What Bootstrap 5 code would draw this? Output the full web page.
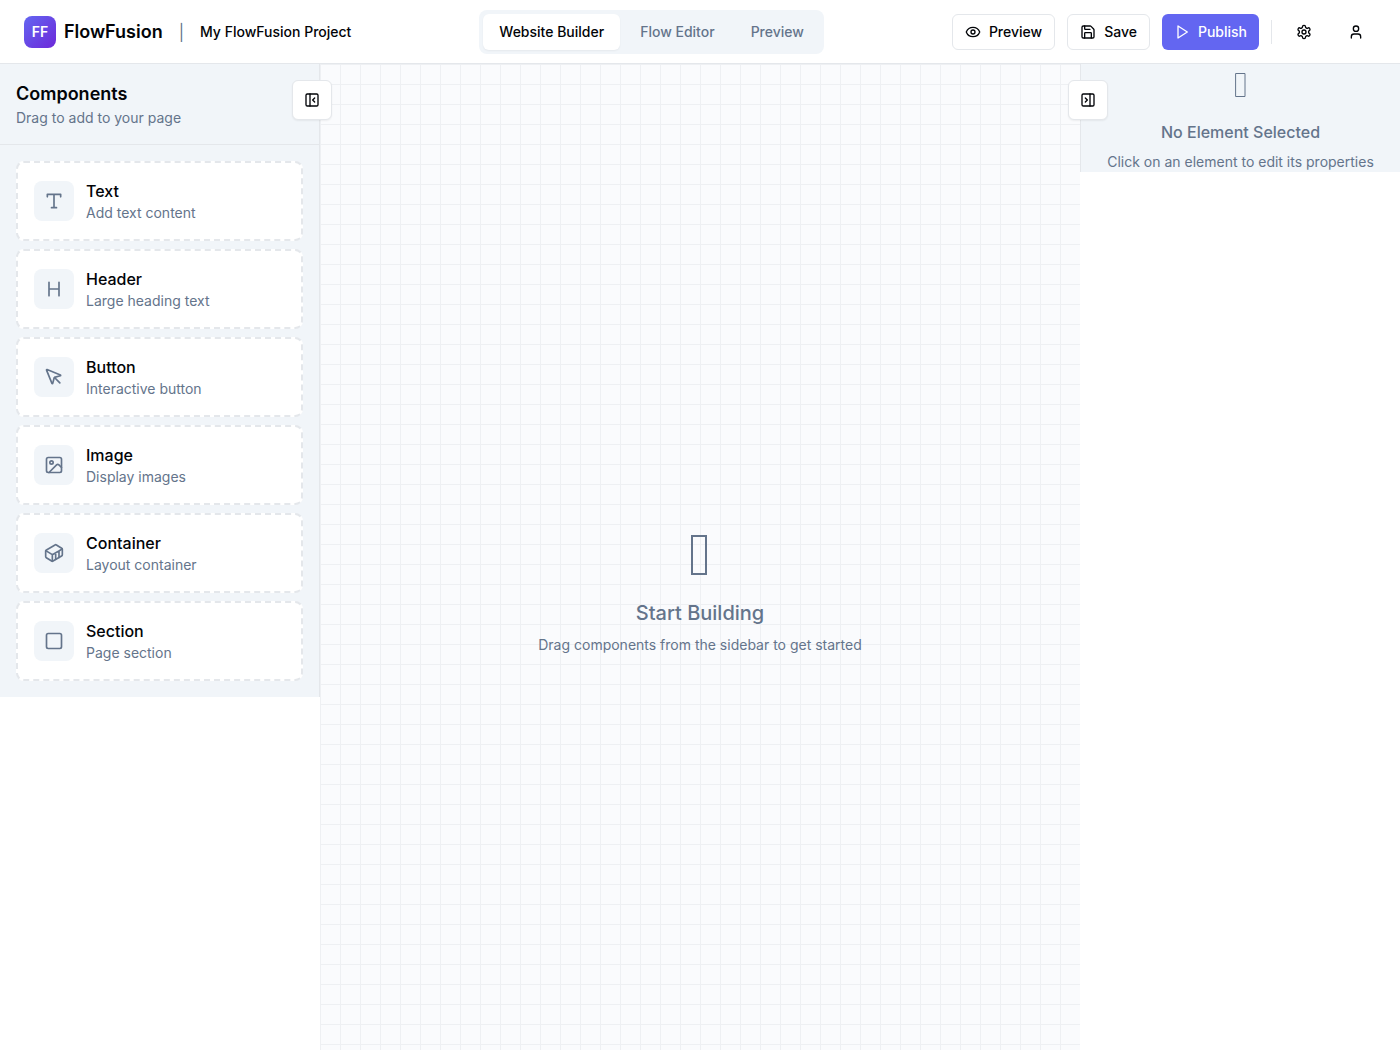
<!DOCTYPE html>
<html lang="en">
<head>
<meta charset="utf-8">
<meta name="viewport" content="width=device-width, initial-scale=1">
<title>FlowFusion</title>
<link href="https://cdn.jsdelivr.net/npm/bootstrap@5.3.0/dist/css/bootstrap.min.css" rel="stylesheet">
<style>
:root { --ink: #020408; --muted: #64748b; --line: #e4e7eb; --soft: #f1f5f9; }
body { font-family: Inter, "Liberation Sans", sans-serif; font-size: 14px; line-height: 20px; color: var(--ink); background: #fff; }
svg { display: block; flex: none; fill: none; stroke: currentColor; stroke-width: 2; stroke-linecap: round; stroke-linejoin: round; }
.ic-sm { width: 16px; height: 16px; }
.ic-md { width: 20px; height: 20px; }
.muted { color: var(--muted); }
.topbar { height: 64px; border-bottom: 1px solid var(--line); }
.logo { width: 32px; height: 32px; border-radius: 8px; background: linear-gradient(135deg, #6366f1, #6d28d9); }
.brand { font-size: 18px; line-height: 28px; }
.bar { font-size: 16px; line-height: 24px; }
.tabs { background: var(--soft); border-radius: 8px; padding: 4px; }
.tabs .btn { padding: 8px 16px; border: 0; color: var(--muted); }
.tabs .btn.active { background: #fff; color: var(--ink); box-shadow: 0 1px 2px rgba(0,0,0,.05); }
.btn { --bs-btn-font-size: 14px; --bs-btn-line-height: 20px; --bs-btn-font-weight: 500; --bs-btn-border-radius: 6px; color: var(--ink); }
.actions { gap: 12px; }
.btn-tool { height: 36px; padding: 0 12px; border: 1px solid var(--line); background: #fff; }
.btn-publish { border: 0; background: #6366f1; color: #fff; }
.btn-square { width: 40px; height: 40px; padding: 0; }
.split { width: 1px; height: 24px; background: var(--line); }
.side { width: 320px; background: var(--soft); }
.side-left { border-right: 1px solid var(--line); }
.side-right { border-left: 1px solid var(--line); }
.side-head { border-bottom: 1px solid var(--line); }
.item { border: 2px dashed var(--line); border-radius: 8px; background: #fff; padding: 16px; gap: 12px; }
.item-icon { width: 40px; height: 40px; border-radius: 8px; background: var(--soft); color: var(--muted); }
.name { font-size: 16px; line-height: 24px; }
.title { font-size: 20px; line-height: 28px; }
.name, .title, .project { font-weight: 500; }
.canvas { min-height: 100vh; background-color: #fafbfd; background-image: linear-gradient(to right, #eef0f3 1px, transparent 1px), linear-gradient(#eef0f3 1px, transparent 1px); background-size: 20px 20px; }
.glyph-lg { width: 60px; height: 60px; }
.glyph-sm { width: 40px; height: 40px; }
.toggle { position: absolute; top: 16px; z-index: 2; background: #fff; border: 1px solid var(--line); box-shadow: 0 1px 2px rgba(0,0,0,.06); }
.toggle-left { left: -28px; }
.toggle-right { right: -28px; }
</style>
<script src="https://cdn.jsdelivr.net/npm/bootstrap@5.3.0/dist/js/bootstrap.bundle.min.js"></script>
</head>
<body>
<div class="vh-100 overflow-hidden d-flex flex-column">
  <header class="topbar d-flex flex-shrink-0 align-items-center justify-content-between px-4">
    <div class="d-flex align-items-center gap-3">
      <div class="d-flex align-items-center gap-2">
        <div class="logo d-flex align-items-center justify-content-center text-white fw-semibold">FF</div>
        <span class="brand fw-semibold">FlowFusion</span>
      </div>
      <span class="bar muted">|</span>
      <span class="project">My FlowFusion Project</span>
    </div>
    <nav class="tabs d-flex gap-1" aria-label="Mode">
      <button type="button" class="btn active">Website Builder</button>
      <button type="button" class="btn">Flow Editor</button>
      <button type="button" class="btn">Preview</button>
    </nav>
    <div class="actions d-flex align-items-center">
      <button type="button" class="btn btn-tool d-flex align-items-center gap-2"><svg class="ic-sm" viewBox="0 0 24 24"><path d="M2.06 12.35a1 1 0 0 1 0-.7 10.75 10.75 0 0 1 19.88 0 1 1 0 0 1 0 .7 10.75 10.75 0 0 1-19.88 0"/><circle cx="12" cy="12" r="3"/></svg>Preview</button>
      <button type="button" class="btn btn-tool d-flex align-items-center gap-2"><svg class="ic-sm" viewBox="0 0 24 24"><path d="M15.2 3a2 2 0 0 1 1.4.6l3.8 3.8a2 2 0 0 1 .6 1.4V19a2 2 0 0 1-2 2H5a2 2 0 0 1-2-2V5a2 2 0 0 1 2-2z"/><path d="M17 21v-7a1 1 0 0 0-1-1H8a1 1 0 0 0-1 1v7"/><path d="M7 3v4a1 1 0 0 0 1 1h7"/></svg>Save</button>
      <button type="button" class="btn btn-tool btn-publish d-flex align-items-center gap-2"><svg class="ic-sm" viewBox="0 0 24 24"><path d="M6 3l14 9-14 9z"/></svg>Publish</button>
      <div class="split"></div>
      <button type="button" class="btn btn-square border-0 d-flex align-items-center justify-content-center" aria-label="Settings"><svg class="ic-sm" viewBox="0 0 24 24"><path d="M12.22 2h-.44a2 2 0 0 0-2 2v.18a2 2 0 0 1-1 1.73l-.43.25a2 2 0 0 1-2 0l-.15-.08a2 2 0 0 0-2.73.73l-.22.38a2 2 0 0 0 .73 2.73l.15.1a2 2 0 0 1 1 1.72v.51a2 2 0 0 1-1 1.74l-.15.09a2 2 0 0 0-.73 2.73l.22.38a2 2 0 0 0 2.73.73l.15-.08a2 2 0 0 1 2 0l.43.25a2 2 0 0 1 1 1.73V20a2 2 0 0 0 2 2h.44a2 2 0 0 0 2-2v-.18a2 2 0 0 1 1-1.73l.43-.25a2 2 0 0 1 2 0l.15.08a2 2 0 0 0 2.73-.73l.22-.39a2 2 0 0 0-.73-2.73l-.15-.08a2 2 0 0 1-1-1.74v-.5a2 2 0 0 1 1-1.74l.15-.09a2 2 0 0 0 .73-2.73l-.22-.38a2 2 0 0 0-2.73-.73l-.15.08a2 2 0 0 1-2 0l-.43-.25a2 2 0 0 1-1-1.73V4a2 2 0 0 0-2-2z"/><circle cx="12" cy="12" r="3"/></svg></button>
      <button type="button" class="btn btn-square border-0 d-flex align-items-center justify-content-center" aria-label="Account"><svg class="ic-sm" viewBox="0 0 24 24"><path d="M19 21v-2a4 4 0 0 0-4-4H9a4 4 0 0 0-4 4v2"/><circle cx="12" cy="7" r="4"/></svg></button>
    </div>
  </header>
  <div class="d-flex align-items-start">
    <aside class="side side-left flex-shrink-0">
      <div class="side-head p-3">
        <h2 class="brand fw-semibold mb-0">Components</h2>
        <p class="muted mb-0">Drag to add to your page</p>
      </div>
      <div class="d-flex flex-column gap-2 p-3">
        <div class="item d-flex align-items-center" draggable="true">
          <div class="item-icon d-flex align-items-center justify-content-center"><svg class="ic-md" viewBox="0 0 24 24"><path d="M4 7V4h16v3M9 20h6M12 4v16"/></svg></div>
          <div><div class="name">Text</div><div class="muted">Add text content</div></div>
        </div>
        <div class="item d-flex align-items-center" draggable="true">
          <div class="item-icon d-flex align-items-center justify-content-center"><svg class="ic-md" viewBox="0 0 24 24"><path d="M6 12h12M6 20V4M18 20V4"/></svg></div>
          <div><div class="name">Header</div><div class="muted">Large heading text</div></div>
        </div>
        <div class="item d-flex align-items-center" draggable="true">
          <div class="item-icon d-flex align-items-center justify-content-center"><svg class="ic-md" viewBox="0 0 24 24"><path d="M12.59 12.59 19 19"/><path d="M3.69 3.04a.5.5 0 0 0-.65.65l6.5 16a.5.5 0 0 0 .95-.06l1.57-6.08a2 2 0 0 1 1.45-1.45l6.12-1.58a.5.5 0 0 0 .06-.95z"/></svg></div>
          <div><div class="name">Button</div><div class="muted">Interactive button</div></div>
        </div>
        <div class="item d-flex align-items-center" draggable="true">
          <div class="item-icon d-flex align-items-center justify-content-center"><svg class="ic-md" viewBox="0 0 24 24"><rect x="3" y="3" width="18" height="18" rx="2"/><circle cx="9" cy="9" r="2"/><path d="m21 15-3.09-3.09a2 2 0 0 0-2.82 0L6 21"/></svg></div>
          <div><div class="name">Image</div><div class="muted">Display images</div></div>
        </div>
        <div class="item d-flex align-items-center" draggable="true">
          <div class="item-icon d-flex align-items-center justify-content-center"><svg class="ic-md" viewBox="0 0 24 24"><path d="M22 7.7c0-.6-.4-1.2-.8-1.5l-6.3-3.9a1.72 1.72 0 0 0-1.7 0l-10.3 6c-.5.2-.9.8-.9 1.4v6.6c0 .5.4 1.2.8 1.5l6.3 3.9a1.72 1.72 0 0 0 1.7 0l10.3-6c.5-.3.9-1 .9-1.5Z"/><path d="M10 21.9V14L2.1 9.1M10 14l11.9-6.9M14 19.8v-8.1M18 17.5V9.4"/></svg></div>
          <div><div class="name">Container</div><div class="muted">Layout container</div></div>
        </div>
        <div class="item d-flex align-items-center" draggable="true">
          <div class="item-icon d-flex align-items-center justify-content-center"><svg class="ic-md" viewBox="0 0 24 24"><rect x="3" y="3" width="18" height="18" rx="2"/></svg></div>
          <div><div class="name">Section</div><div class="muted">Page section</div></div>
        </div>
      </div>
    </aside>
    <main class="canvas flex-grow-1 position-relative d-flex flex-column align-items-center justify-content-center muted text-center">
      <button type="button" class="btn btn-square toggle toggle-left d-flex align-items-center justify-content-center" aria-label="Hide components"><svg class="ic-sm" viewBox="0 0 24 24"><rect x="3" y="3" width="18" height="18" rx="2"/><path d="M9 3v18M16 15l-3-3 3-3"/></svg></button>
      <button type="button" class="btn btn-square toggle toggle-right d-flex align-items-center justify-content-center" aria-label="Hide properties"><svg class="ic-sm" viewBox="0 0 24 24"><rect x="3" y="3" width="18" height="18" rx="2"/><path d="M15 3v18M8 9l3 3-3 3"/></svg></button>
      <svg class="glyph-lg mb-3" viewBox="0 0 60 60" aria-hidden="true"><path stroke-linejoin="miter" d="M22 13h14v38H22z"/></svg>
      <h1 class="title mb-2">Start Building</h1>
      <p class="mb-0">Drag components from the sidebar to get started</p>
    </main>
    <aside class="side side-right flex-shrink-0 d-flex flex-column align-items-center muted text-center">
      <svg class="glyph-sm mb-3" viewBox="0 0 40 40" aria-hidden="true"><path stroke-width="1" stroke-linejoin="miter" d="M15 9.500h9v23h-9z"/></svg>
      <h2 class="name mb-2">No Element Selected</h2>
      <p class="mb-0">Click on an element to edit its properties</p>
    </aside>
  </div>
</div>
</body>
</html>
